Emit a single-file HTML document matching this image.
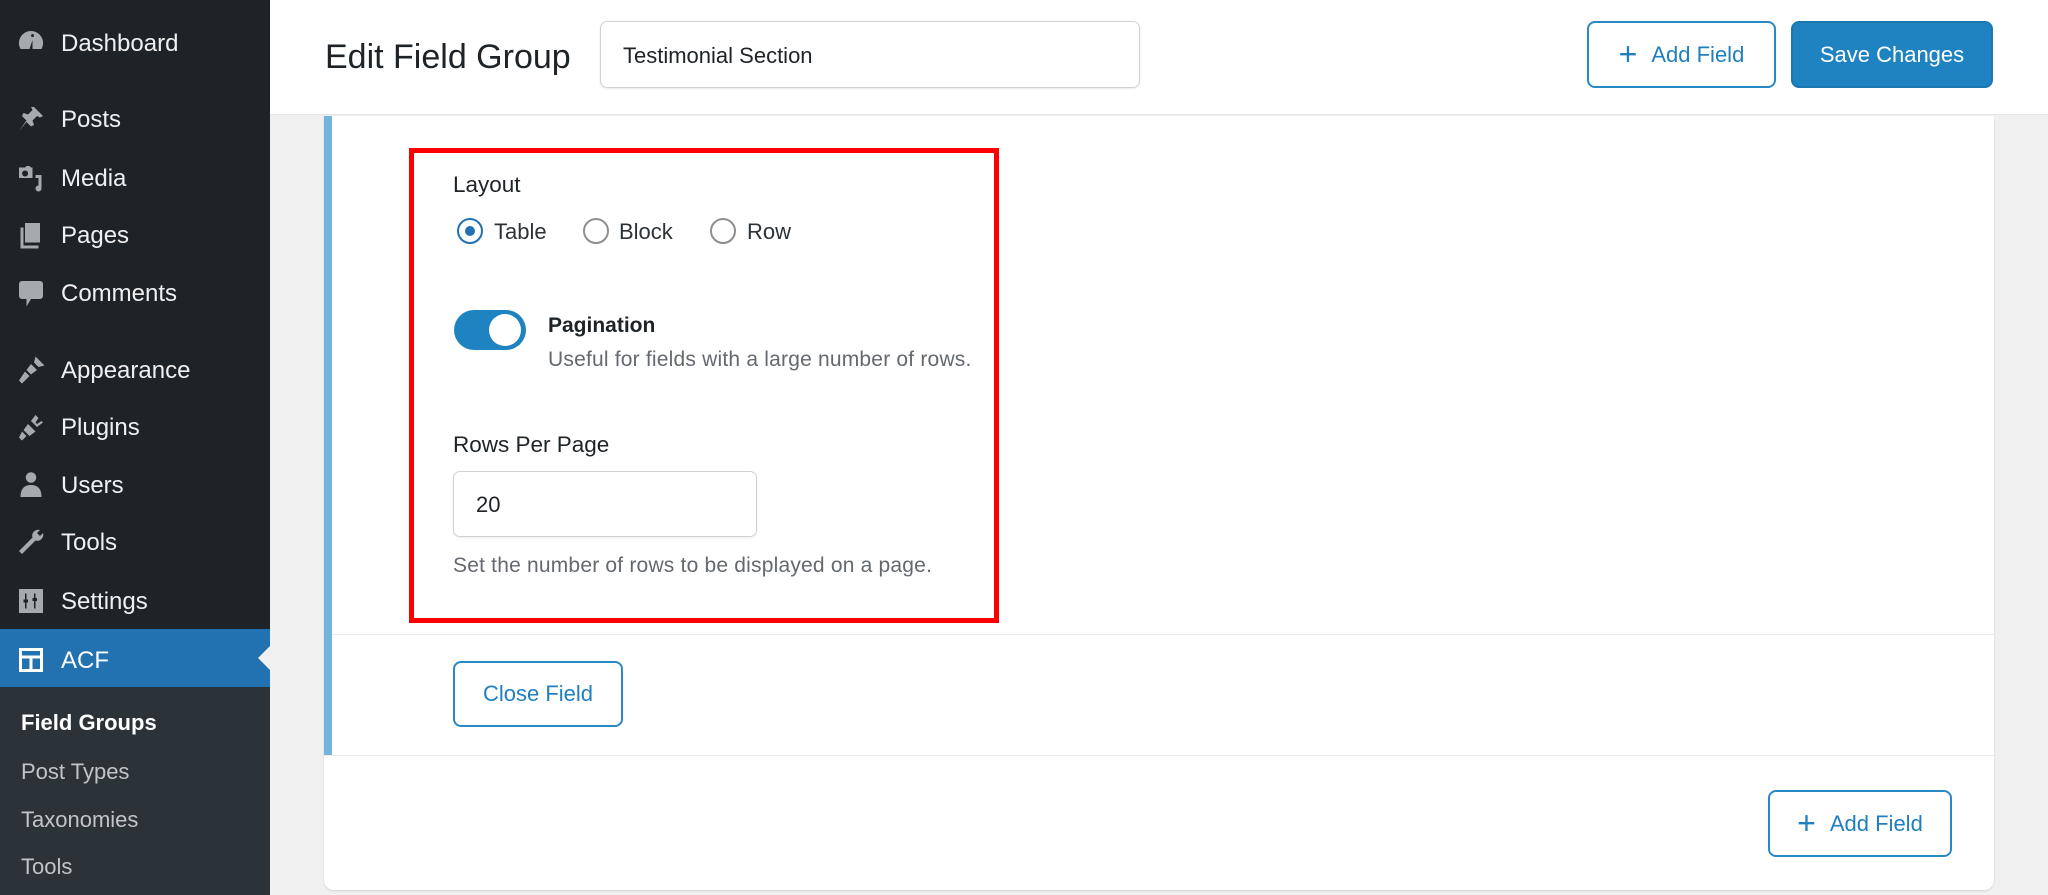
<!DOCTYPE html>
<html><head><meta charset="utf-8"><style>
*{box-sizing:border-box;margin:0;padding:0}
body{width:2048px;height:895px;overflow:hidden;background:#f0f0f1;font-family:"Liberation Sans",sans-serif;position:relative}
.a{position:absolute}
#side{left:0;top:0;width:270px;height:895px;background:#1d2327}
.mi{position:absolute;left:61px;color:#f0f0f1;font-size:24px;line-height:30px}
.ic{position:absolute;left:16px;width:30px;height:30px;fill:#a7aaad}
.si{position:absolute;left:21px;color:#c3c4c7;font-size:22px;line-height:28px}
.btn{position:absolute;border:2px solid #2a88c5;border-radius:8px;color:#1f7fbf;font-size:22px;display:flex;align-items:center;justify-content:center;background:#fff}
.lbl{position:absolute;color:#1d2327;font-size:22.5px}
.desc{position:absolute;color:#646970;font-size:21px;letter-spacing:.2px}
.radio{position:absolute;width:26px;height:26px;border:2px solid #8c8f94;border-radius:50%;background:#fff}
.rt{position:absolute;top:219px;font-size:22px;color:#2c3338}
</style></head><body>
<div id="side" class="a">
<svg class="ic" style="top:28px" viewBox="0 0 20 20"><path d="M10 2a8 8 0 0 0-7 12h14a8 8 0 0 0-7-12zm0 3a1 1 0 1 1 0 .1zm-1 9l2-6 0 6z"/></svg>
<div class="mi" style="top:29px">Dashboard</div>
<svg class="ic" style="top:104px" viewBox="0 0 20 20"><path d="M12 2l6 6-2 1-2-1-3 3 1 3-2 1-3-3-5 6 5-7-3-3 1-2 3 1 3-3-1-2z"/></svg>
<div class="mi" style="top:105px">Posts</div>
<svg class="ic" style="top:163px" viewBox="0 0 20 20"><path d="M2 3h4l1-1h2l1 1h1v7H2zm4 2a2 2 0 1 0 .1 0zM13 8h4v9a2 2 0 1 1-2-2V10h-2z"/></svg>
<div class="mi" style="top:164px">Media</div>
<svg class="ic" style="top:220px" viewBox="0 0 20 20"><path d="M6 2h10v13H6zM3 5h2v12h10v2H3z"/></svg>
<div class="mi" style="top:221px">Pages</div>
<svg class="ic" style="top:278px" viewBox="0 0 20 20"><path d="M4 2h12a2 2 0 0 1 2 2v8a2 2 0 0 1-2 2h-6l-3 5v-5H4a2 2 0 0 1-2-2V4a2 2 0 0 1 2-2z"/></svg>
<div class="mi" style="top:279px">Comments</div>
<svg class="ic" style="top:355px" viewBox="0 0 20 20"><path d="M13 1l6 6-4 1-3-3zM10 6l4 4-4 3-3-3zM6 11l3 3-5 5-2-2z"/></svg>
<div class="mi" style="top:356px">Appearance</div>
<svg class="ic" style="top:412px" viewBox="0 0 20 20"><path d="M13 2l-3 4 4 4 4-3-1-1-3 2-1-1 2-3zM8 8l5 5-4 3-4-4zM4 13l3 3-3 3-2-2z"/></svg>
<div class="mi" style="top:413px">Plugins</div>
<svg class="ic" style="top:470px" viewBox="0 0 20 20"><circle cx="10" cy="5" r="3.5"/><path d="M3 18c0-6 3-8 7-8s7 2 7 8z"/></svg>
<div class="mi" style="top:471px">Users</div>
<svg class="ic" style="top:527px" viewBox="0 0 20 20"><path d="M16 2a4 4 0 0 0-5 5L2 16l2 2 9-9a4 4 0 0 0 5-5l-2 2-2-2z"/></svg>
<div class="mi" style="top:528px">Tools</div>
<svg class="ic" style="top:586px" viewBox="0 0 20 20"><path d="M2 2h16v16H2zm4 3v4H5v2h1v4h1v-4h1V9H7V5zm6 0v3h-1v2h1v5h1v-5h1V8h-1V5z"/></svg>
<div class="mi" style="top:587px">Settings</div>
<div class="a" style="left:0;top:629px;width:270px;height:58px;background:#2271b1"></div>
<div class="a" style="left:258px;top:646px;width:0;height:0;border-top:12px solid transparent;border-bottom:12px solid transparent;border-right:12px solid #f0f0f1"></div>
<svg class="ic" style="top:645px;fill:#fff" viewBox="0 0 20 20"><path d="M2 2h16v16H2zm2 2v3h12V4zm0 5v7h5V9zm7 0v7h5V9z"/></svg>
<div class="mi" style="top:646px;color:#fff">ACF</div>
<div class="a" style="left:0;top:687px;width:270px;height:208px;background:#2c3338"></div>
<div class="si" style="top:709px;color:#fff;font-weight:bold">Field Groups</div>
<div class="si" style="top:758px">Post Types</div>
<div class="si" style="top:806px">Taxonomies</div>
<div class="si" style="top:853px">Tools</div>
</div>
<div class="a" style="left:270px;top:0;width:1778px;height:115px;background:#fff;border-bottom:1px solid #e2e4e7"></div>
<div class="a" style="left:325px;top:37px;font-size:34px;color:#1d2327;line-height:40px">Edit Field Group</div>
<div class="a" style="left:600px;top:21px;width:540px;height:67px;border:1px solid #d0d2d5;border-radius:7px;box-shadow:0 1px 2px rgba(0,0,0,.08);font-size:22px;color:#1d2327;padding-left:22px;line-height:67px">Testimonial Section</div>
<div class="btn" style="left:1587px;top:21px;width:189px;height:67px"><span style="font-size:32px;margin-right:14px;font-weight:300">+</span>Add Field</div>
<div class="btn" style="left:1791px;top:21px;width:202px;height:67px;background:#1e83c0;border-color:#1a77b0;color:#fff">Save Changes</div>
<div class="a" style="left:324px;top:116px;width:1670px;height:774px;background:#fff;border-radius:0 0 10px 10px;box-shadow:0 1px 2px rgba(0,0,0,.12)"></div>
<div class="a" style="left:324px;top:116px;width:8px;height:639px;background:#72b4db"></div>
<div class="a" style="left:332px;top:634px;width:1662px;height:1px;background:#e8e9eb"></div>
<div class="a" style="left:324px;top:755px;width:1670px;height:1px;background:#e8e9eb"></div>
<div class="a" style="left:409px;top:148px;width:590px;height:475px;border:5px solid #f00"></div>
<div class="lbl" style="left:453px;top:172px">Layout</div>
<div class="radio" style="left:457px;top:218px;border-color:#2271b1"><div class="a" style="left:6px;top:6px;width:10px;height:10px;border-radius:50%;background:#2271b1"></div></div>
<div class="rt" style="left:494px">Table</div>
<div class="radio" style="left:583px;top:218px"></div>
<div class="rt" style="left:619px">Block</div>
<div class="radio" style="left:710px;top:218px"></div>
<div class="rt" style="left:747px">Row</div>
<div class="a" style="left:454px;top:310px;width:72px;height:40px;border-radius:20px;background:#1e83c0"><div class="a" style="left:35px;top:4px;width:32px;height:32px;border-radius:50%;background:#fff"></div></div>
<div class="lbl" style="left:548px;top:314px;font-weight:bold;font-size:21px">Pagination</div>
<div class="desc" style="left:548px;top:348px">Useful for fields with a large number of rows.</div>
<div class="lbl" style="left:453px;top:432px">Rows Per Page</div>
<div class="a" style="left:453px;top:471px;width:304px;height:66px;border:1px solid #d0d2d5;border-radius:7px;box-shadow:0 1px 2px rgba(0,0,0,.08);font-size:22px;color:#1d2327;padding-left:22px;line-height:66px">20</div>
<div class="desc" style="left:453px;top:554px">Set the number of rows to be displayed on a page.</div>
<div class="btn" style="left:453px;top:661px;width:170px;height:66px">Close Field</div>
<div class="btn" style="left:1768px;top:790px;width:184px;height:67px"><span style="font-size:32px;margin-right:14px;font-weight:300">+</span>Add Field</div>
</body></html>
